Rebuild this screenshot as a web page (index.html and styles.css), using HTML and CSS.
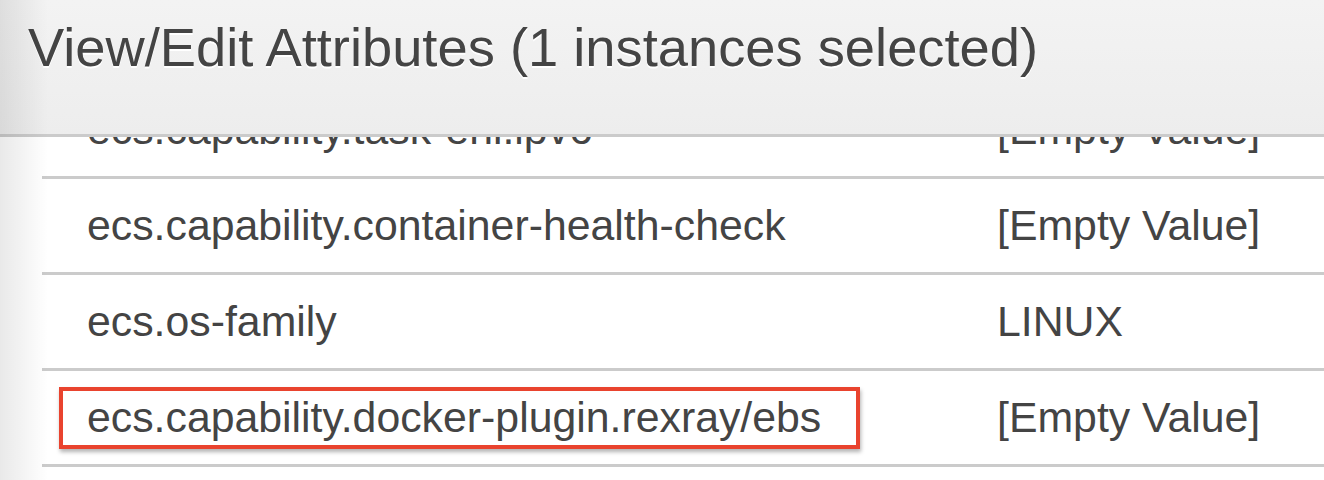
FILE: index.html
```html
<!DOCTYPE html>
<html>
<head>
<meta charset="utf-8">
<link rel="stylesheet" href="styles.css">
</head>
<body>
<div class="modal">
  <div class="header">
    <h1 class="title">View/Edit Attributes (1 instances selected)</h1>
  </div>
  <div class="body">
    <div class="list">
      <div class="row"><span class="key">ecs.capability.task-eni.ipv6</span><span class="val">[Empty Value]</span></div>
      <div class="row"><span class="key">ecs.capability.container-health-check</span><span class="val">[Empty Value]</span></div>
      <div class="row"><span class="key">ecs.os-family</span><span class="val">LINUX</span></div>
      <div class="row"><span class="key">ecs.capability.docker-plugin.rexray/ebs</span><span class="val">[Empty Value]</span><span class="mark"></span></div>
    </div>
  </div>
</div>
</body>
</html>
```
FILE: styles.css
```css
html, body {
  margin: 0;
  padding: 0;
  background: #fff;
}
.modal {
  position: relative;
  width: 1324px;
  height: 480px;
  overflow: hidden;
  font-family: "Liberation Sans", Arial, sans-serif;
  color: #444;
}
.modal::before {
  content: "";
  position: absolute;
  left: 0;
  top: 0;
  bottom: 0;
  width: 48px;
  background: linear-gradient(to right, rgba(0,0,0,0.085), rgba(0,0,0,0));
  pointer-events: none;
  z-index: 3;
}
.header {
  position: relative;
  z-index: 2;
  box-sizing: border-box;
  background: linear-gradient(#f3f3f3, #ededed);
  border-bottom: 3px solid #cbcbcb;
  height: 137px;
  padding-left: 28px;
}
.title {
  margin: 0;
  padding-top: 18px;
  font-size: 54.3px;
  line-height: 60px;
  font-weight: normal;
  color: #444;
  text-shadow: 0 2px 0 #fff;
}
.body {
  height: 343px;
  overflow: hidden;
  padding-left: 42px;
}
.list {
  margin-top: -54px;
}
.row {
  position: relative;
  display: grid;
  grid-template-columns: 955px 1fr;
  height: 93px;
  border-bottom: 3px solid #cbcbcb;
  font-size: 42.8px;
  line-height: 93px;
  white-space: nowrap;
}
.key {
  padding-left: 45px;
}
.val {
  padding-left: 0;
}
.mark {
  position: absolute;
  left: 17px;
  top: 16px;
  width: 801px;
  height: 62px;
  box-sizing: border-box;
  border: 4px solid #e9432e;
  box-shadow: 1px 3px 4px rgba(0,0,0,0.3);
}
```
